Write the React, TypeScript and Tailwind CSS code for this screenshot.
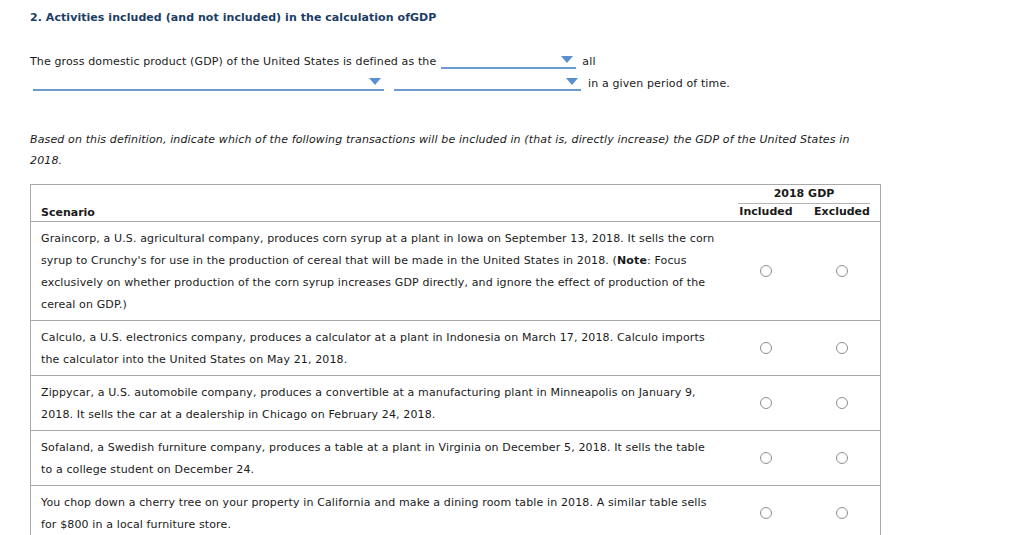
const rows = [
  {
    id: 1,
    text: (
      <>
        Graincorp, a U.S. agricultural company, produces corn syrup at a plant in Iowa on September 13, 2018. It sells the corn syrup to Crunchy's for use in the production of cereal that will be made in the United States in 2018. (<b>Note</b>: Focus exclusively on whether production of the corn syrup increases GDP directly, and ignore the effect of production of the cereal on GDP.)
      </>
    ),
  },
  {
    id: 2,
    text: "Calculo, a U.S. electronics company, produces a calculator at a plant in Indonesia on March 17, 2018. Calculo imports the calculator into the United States on May 21, 2018.",
  },
  {
    id: 3,
    text: "Zippycar, a U.S. automobile company, produces a convertible at a manufacturing plant in Minneapolis on January 9, 2018. It sells the car at a dealership in Chicago on February 24, 2018.",
  },
  {
    id: 4,
    text: "Sofaland, a Swedish furniture company, produces a table at a plant in Virginia on December 5, 2018. It sells the table to a college student on December 24.",
  },
  {
    id: 5,
    text: "You chop down a cherry tree on your property in California and make a dining room table in 2018. A similar table sells for $800 in a local furniture store.",
  },
];

function Dropdown({ width }: { width: string }) {
  return (
    <span className={`relative inline-block h-[19px] border-b-2 border-[#6b9bd1] ${width}`}>
      <span className="absolute right-[3px] top-[6px] h-0 w-0 border-x-[6px] border-t-[7px] border-x-transparent border-t-[#5b8fcf]" />
    </span>
  );
}

function Radio() {
  return (
    <div className="flex items-center justify-center">
      <span className="h-[12px] w-[12px] rounded-full border border-[#8f8f8f] bg-white" />
    </div>
  );
}

export default function App() {
  return (
    <div className="min-h-screen bg-white px-[30px] pt-[10px] text-[11px] tracking-[0.13px] text-[#1a1a1a] [font-family:'DejaVu_Sans',Verdana,sans-serif]">
      <h2 className="text-[11px] font-bold leading-[16px] tracking-[0.06px] text-[#1b3d66]">
        2. Activities included (and not included) in the calculation ofGDP
      </h2>

      {/* definition with blanks */}
      <div className="mt-[25px]">
        <div className="flex h-[22px] items-center">
          <span>The gross domestic product (GDP) of the United States is defined as the</span>
          <span className="ml-[5px]"><Dropdown width="w-[135px]" /></span>
          <span className="ml-[6px]">all</span>
        </div>
        <div className="flex h-[22px] items-center">
          <span className="ml-[3px]"><Dropdown width="w-[351px]" /></span>
          <span className="ml-[10px]"><Dropdown width="w-[187px]" /></span>
          <span className="ml-[7px]">in a given period of time.</span>
        </div>
      </div>

      <p className="mt-[34px] w-[850px] italic leading-[21px]">
        Based on this definition, indicate which of the following transactions will be included in (that is, directly increase) the GDP of the United States in 2018.
      </p>

      <table className="mt-[13px] w-[851px] border-collapse border border-[#a9a9a9]">
        <thead>
          <tr>
            <th className="px-[10px] pb-[1px] pt-[21px] text-left align-bottom leading-[14px] tracking-normal">Scenario</th>
            <th colSpan={2} className="w-[152px] p-0 align-top tracking-normal">
              <div className="mx-[10px] mt-[2px] border-b border-[#b5b5b5] pb-[2px] leading-[14px]">2018 GDP</div>
              <div className="flex pb-[1px] pt-[1px] leading-[14px]">
                <span className="w-[76px] text-center">Included</span>
                <span className="w-[76px] text-center">Excluded</span>
              </div>
            </th>
          </tr>
        </thead>
        <tbody>
          {rows.map((r) => (
            <tr key={r.id} className="border-t border-[#a9a9a9]">
              <td className="pb-[4px] pl-[10px] pr-[12px] pt-[6px] align-top leading-[22px]">{r.text}</td>
              <td className="w-[76px] align-middle"><Radio /></td>
              <td className="w-[76px] align-middle"><Radio /></td>
            </tr>
          ))}
        </tbody>
      </table>
    </div>
  );
}
